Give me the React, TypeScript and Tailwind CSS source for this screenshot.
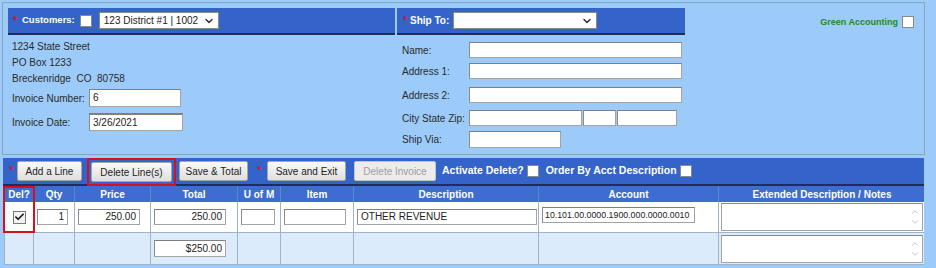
import { ChevronDown, ChevronUp, Check } from "lucide-react";

const inputBox =
  "bg-white border border-[#a4a4a4] border-t-[#7f7f7f] border-l-[#8c8c8c] flex items-center text-[#222] leading-none overflow-hidden whitespace-nowrap";

function Box({
  className = "",
  small = false,
  children,
}: {
  className?: string;
  small?: boolean;
  children?: React.ReactNode;
}) {
  return (
    <div className={`${inputBox} ${small ? "text-[8.8px] px-[2px]" : "text-[10px] px-[3px]"} ${className}`}>
      {children}
    </div>
  );
}

function Cb({ checked = false, className = "" }: { checked?: boolean; className?: string }) {
  return (
    <div
      className={`w-[12px] h-[12px] bg-white border border-[#8a8a8a] flex items-center justify-center ${className}`}
    >
      {checked && <Check size={11} strokeWidth={3.5} className="text-[#111]" />}
    </div>
  );
}

function Star({ className = "" }: { className?: string }) {
  return <span className={`w-[5px] text-[#d4142a] font-bold text-[11px] leading-none ${className}`}>*</span>;
}

function Btn({ className = "", disabled = false, children }: { className?: string; disabled?: boolean; children: React.ReactNode }) {
  return (
    <div
      className={`h-[20px] flex items-center justify-center rounded-[2px] border text-[10px] ${
        disabled
          ? "bg-[#ececec] border-[#c4c4c4] text-[#9c9c9c]"
          : "bg-gradient-to-b from-[#fafafa] to-[#dedede] border-[#a7a7a7] text-[#222]"
      } ${className}`}
    >
      {children}
    </div>
  );
}

function Notes() {
  return (
    <div className="w-[202px] h-[28px] bg-white border border-[#a4a4a4] border-t-[#8a8a8a] flex justify-end">
      <div className="flex flex-col items-center justify-center pr-[2px] text-[#b5b5b5]">
        <ChevronUp size={10} strokeWidth={2} />
        <ChevronDown size={10} strokeWidth={2} />
      </div>
    </div>
  );
}

const cols = "grid grid-cols-[29px_41px_76px_87px_43px_73px_185px_180px_206px]";
const cell = "border-r border-[#9fb2c6] flex items-center";

export default function App() {
  return (
    <div className="w-[936px] h-[268px] overflow-hidden bg-[#9ccbfa] font-['Liberation_Sans',Arial,sans-serif] text-[10px] text-[#2a2a2a]">
      {/* Top panel */}
      <div className="ml-[2px] mt-[2px] w-[923px] h-[153px] border border-[#86a5c4] flex pt-[5px] pl-[5px]">
        {/* Customer */}
        <div className="w-[387px] flex flex-col">
          <div className="h-[27px] bg-[#3464c9] border-b-2 border-[#1c2d5e] flex items-center">
            <Star className="ml-[5px]" />
            <span className="ml-[4px] text-white font-bold text-[9.5px]">Customers:</span>
            <Cb className="ml-[5px]" />
            <div className="ml-[7px] w-[120px] h-[17px] bg-white border border-[#8a8a8a] flex items-center justify-between pl-[4px] pr-[3px] text-[10px] text-[#222]">
              <span>123 District #1 | 1002</span>
              <ChevronDown size={12} strokeWidth={3} className="text-[#333]" />
            </div>
          </div>
          <div className="pl-[4px] mt-[4px] leading-[16px] text-[#2a2a2a]">
            <div>1234 State Street</div>
            <div>PO Box 1233</div>
            <div>Breckenridge&nbsp; CO&nbsp; 80758</div>
          </div>
          <div className="pl-[4px] mt-[2px] flex items-center">
            <span className="w-[77px]">Invoice Number:</span>
            <Box className="w-[92px] h-[18px]">6</Box>
          </div>
          <div className="pl-[4px] mt-[6px] flex items-center">
            <span className="w-[77px]">Invoice Date:</span>
            <Box className="w-[94px] h-[18px] border-t-2 border-t-[#6f6f6f]">3/26/2021</Box>
          </div>
        </div>

        {/* Ship to */}
        <div className="w-[288px] ml-[2px] flex flex-col">
          <div className="h-[27px] bg-[#3464c9] border-b-2 border-[#1c2d5e] flex items-center">
            <Star className="ml-[6px]" />
            <span className="ml-[2px] text-white font-bold text-[10px]">Ship To:</span>
            <div className="ml-[4px] w-[144px] h-[17px] bg-white border border-[#8a8a8a] flex items-center justify-end pr-[3px]">
              <ChevronDown size={12} strokeWidth={3} className="text-[#333]" />
            </div>
          </div>
          <div className="pl-[5px] flex flex-col">
            <div className="mt-[7px] flex items-center">
              <span className="w-[67px]">Name:</span>
              <Box className="w-[213px] h-[16px]" />
            </div>
            <div className="mt-[5px] flex items-center">
              <span className="w-[67px]">Address 1:</span>
              <Box className="w-[213px] h-[16px]" />
            </div>
            <div className="mt-[8px] flex items-center">
              <span className="w-[67px]">Address 2:</span>
              <Box className="w-[213px] h-[16px]" />
            </div>
            <div className="mt-[7px] flex items-center">
              <span className="w-[67px]">City State Zip:</span>
              <Box className="w-[113px] h-[16px]" />
              <Box className="ml-[1px] w-[33px] h-[16px]" />
              <Box className="ml-[1px] w-[60px] h-[16px]" />
            </div>
            <div className="mt-[5px] flex items-center">
              <span className="w-[67px]">Ship Via:</span>
              <Box className="w-[92px] h-[17px]" />
            </div>
          </div>
        </div>

        {/* Right */}
        <div className="flex-1 flex justify-end items-start pr-[10px] pt-[8px]">
          <span className="text-[#1f8a22] font-bold text-[9px] leading-[13px]">Green Accounting</span>
          <Cb className="ml-[4px]" />
        </div>
      </div>

      {/* Toolbar */}
      <div className="mt-[3px] ml-[3px] w-[921px] h-[28px] bg-[#3464c9] border-b-2 border-[#1c2d5e] flex items-center">
        <Star className="ml-[6px] self-start mt-[7px]" />
        <Btn className="ml-[3px] w-[65px]">Add a Line</Btn>
        <div className="ml-[5px] w-[89px] h-[28px] self-start border-2 border-[#d3111f] flex items-center justify-center">
          <Btn className="w-[81px]">Delete Line(s)</Btn>
        </div>
        <Btn className="ml-[3px] w-[69px]">Save &amp; Total</Btn>
        <Star className="ml-[9px] self-start mt-[7px]" />
        <Btn className="ml-[5px] w-[79px]">Save and Exit</Btn>
        <Btn disabled className="ml-[8px] w-[82px]">Delete Invoice</Btn>
        <span className="ml-[6px] text-white font-bold text-[10.5px]">Activate Delete?</span>
        <Cb className="ml-[3px]" />
        <span className="ml-[7px] text-white font-bold text-[10.5px]">Order By Acct Description</span>
        <Cb className="ml-[3px]" />
      </div>

      {/* Lines table */}
      <div className="relative ml-[4px] w-[920px] border-l border-[#9fb2c6]">
        <div className={`${cols} h-[16px] bg-[#3d6dd0] text-white font-bold text-[10px]`}>
          {["Del?", "Qty", "Price", "Total", "U of M", "Item", "Description", "Account", "Extended Description / Notes"].map(
            (h) => (
              <div key={h} className="flex items-center justify-center border-r border-[#5f86d6] last:border-r-0">
                {h}
              </div>
            )
          )}
        </div>

        <div className={`${cols} h-[31px] bg-white border-b border-[#9fb2c6]`}>
          <div className={`${cell} justify-center`}>
            <div className="w-[13px] h-[13px] bg-[#f2f2f2] border border-[#7a7a7a] flex items-center justify-center">
              <Check size={12} strokeWidth={3.5} className="text-[#111]" />
            </div>
          </div>
          <div className={`${cell} pl-[3px]`}>
            <Box className="w-[31px] h-[16px] justify-end">1</Box>
          </div>
          <div className={`${cell} pl-[3px]`}>
            <Box className="w-[62px] h-[16px] justify-end">250.00</Box>
          </div>
          <div className={`${cell} pl-[3px]`}>
            <Box className="w-[72px] h-[16px] justify-end">250.00</Box>
          </div>
          <div className={`${cell} pl-[3px]`}>
            <Box className="w-[34px] h-[16px]" />
          </div>
          <div className={`${cell} pl-[3px]`}>
            <Box className="w-[62px] h-[16px]" />
          </div>
          <div className={`${cell} pl-[3px]`}>
            <Box className="w-[180px] h-[16px]">OTHER REVENUE</Box>
          </div>
          <div className="border-r border-[#9fb2c6] flex items-start pt-[5px] pl-[3px]">
            <Box small className="w-[153px] h-[16px]">10.101.00.0000.1900.000.0000.0010</Box>
          </div>
          <div className="flex items-center pl-[2px]">
            <Notes />
          </div>
        </div>

        <div className={`${cols} h-[32px] bg-[#dbebfc] border-b border-[#9fb2c6]`}>
          <div className={cell} />
          <div className={cell} />
          <div className={cell} />
          <div className={`${cell} pl-[3px]`}>
            <Box className="w-[72px] h-[17px] justify-end">$250.00</Box>
          </div>
          <div className={cell} />
          <div className={cell} />
          <div className={cell} />
          <div className={cell} />
          <div className="flex items-center pl-[2px]">
            <Notes />
          </div>
        </div>

        {/* highlight over the Del? column */}
        <div className="absolute left-[-2px] top-0 w-[32px] h-[47px] border-2 border-[#d3111f]" />
      </div>
    </div>
  );
}
